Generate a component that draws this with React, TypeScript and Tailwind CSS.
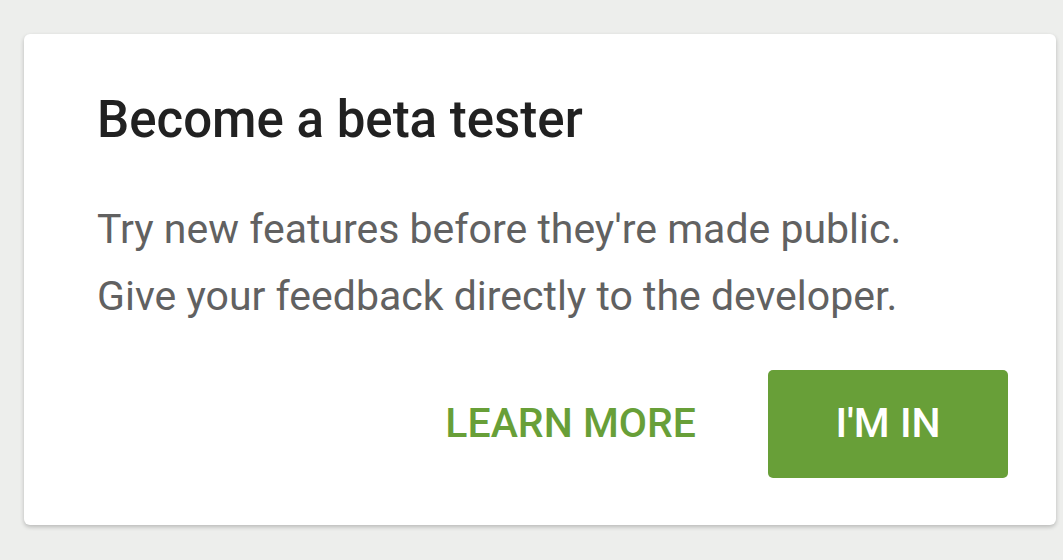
export default function App() {
  return (
    <div
      className="min-h-[560px] w-full bg-[#edeeec] pt-[34px] pl-[24px] pr-[7px] pb-[35px]"
      style={{ fontFamily: 'Roboto, "Noto Sans", sans-serif' }}
    >
      <div className="rounded-[6px] bg-white pt-[56px] pl-[73px] pr-[48px] pb-[47px] shadow-[0_2px_4px_rgba(0,0,0,0.22)]">
        <h1 className="text-[51px] leading-[60px] font-medium text-[#212121]">Become a beta tester</h1>
        <div className="mt-[46px] text-[41px] leading-[67px] text-[#616161]">
          <p>Try new features before they're made public.</p>
          <p>Give your feedback directly to the developer.</p>
        </div>
        <div className="mt-[40px] flex items-center justify-end">
          <button className="mr-[56px] h-[108px] px-4 text-[41px] font-medium text-[#689f38]">LEARN MORE</button>
          <button className="h-[108px] w-[240px] rounded-[5px] bg-[#689f38] text-[41px] font-medium text-white">
            I'M IN
          </button>
        </div>
      </div>
    </div>
  )
}
